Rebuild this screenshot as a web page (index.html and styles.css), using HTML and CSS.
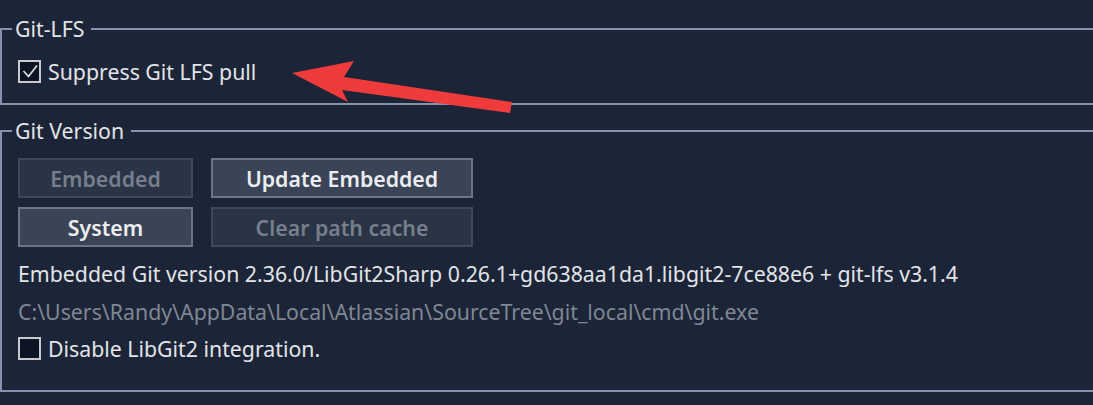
FILE: index.html
```html
<!DOCTYPE html>
<html>
<head>
<meta charset="utf-8">
<link rel="stylesheet" href="styles.css">
</head>
<body>
<div class="page">
  <fieldset class="group group-lfs">
    <legend class="group-title">Git-LFS</legend>
    <label class="check-row">
      <span class="checkbox checked">
        <svg width="22" height="22" viewBox="0 0 22 22"><polyline points="4.5,11 9.5,16.5 18,5.5" fill="none" stroke="#e6e6e6" stroke-width="1.6"/></svg>
      </span>
      <span class="check-label">Suppress Git LFS pull</span>
    </label>
  </fieldset>
  <fieldset class="group group-version">
    <legend class="group-title">Git Version</legend>
    <div class="btn-grid">
      <button class="btn btn-small disabled">Embedded</button>
      <button class="btn btn-wide">Update Embedded</button>
      <button class="btn btn-small">System</button>
      <button class="btn btn-wide disabled">Clear path cache</button>
    </div>
    <div class="info">Embedded Git version 2.36.0/LibGit2Sharp 0.26.1+gd638aa1da1.libgit2-7ce88e6 + git-lfs v3.1.4</div>
    <div class="path">C:\Users\Randy\AppData\Local\Atlassian\SourceTree\git_local\cmd\git.exe</div>
    <label class="check-row check-row-2">
      <span class="checkbox"></span>
      <span class="check-label">Disable LibGit2 integration.</span>
    </label>
  </fieldset>
  <svg class="arrow" width="1093" height="405" viewBox="0 0 1093 405">
    <polygon points="292,73 354,61 344,77 512,102 510,113 342,90 348,102" fill="#ef3b3b"/>
  </svg>
</div>
</body>
</html>
```

FILE: styles.css
```css
html, body {
  margin: 0;
  padding: 0;
  background: #1c2537;
  overflow: hidden;
}
body {
  width: 1093px;
  height: 405px;
  font-family: "Noto Sans", "Open Sans", sans-serif;
  font-size: 21.3px;
  color: #e2e4e8;
}
.page {
  position: relative;
  width: 1093px;
  height: 405px;
  padding-top: 15px;
  box-sizing: border-box;
}
.group {
  margin: 0 -20px 0 0;
  border: 2px solid #8592ae;
  border-right: none;
  padding: 0 0 0 16px;
  min-width: 0;
}
.group-title {
  padding: 0 7px 0 3px;
  margin-left: -6px;
  line-height: 27px;
  font-size: 21.3px;
  color: #e2e4e8;
}
.group-lfs {
  height: 69px;
  box-sizing: content-box;
  padding-top: 17px;
}
.group-version {
  margin-top: 12px;
}
.check-row {
  display: flex;
  align-items: center;
  gap: 7px;
  height: 24px;
}
.checkbox {
  width: 23px;
  height: 23px;
  box-sizing: border-box;
  border: 2px solid #c9cbd0;
  background: #0d1525;
  display: flex;
  align-items: center;
  justify-content: center;
}
.checkbox svg { display: block; flex: none; }
.btn-grid {
  display: grid;
  grid-template-columns: 175px 262px;
  grid-auto-rows: 40px;
  column-gap: 18px;
  row-gap: 9px;
  margin-top: 14px;
}
.btn {
  font-family: inherit;
  font-size: 21.3px;
  font-weight: 600;
  color: #ebedf0;
  background: #3a4456;
  border: 2px solid #6d7584;
  padding: 0;
}
.btn.disabled {
  background: #2a3445;
  border-color: #3e4859;
  color: #767f8d;
}
.info {
  margin-top: 8px;
  line-height: 38px;
}
.path {
  color: #7f8794;
  line-height: 38px;
}
.check-row-2 {
  margin-top: 5px;
  margin-bottom: 30px;
}
.arrow {
  position: absolute;
  left: 0;
  top: 0;
  pointer-events: none;
}
```
